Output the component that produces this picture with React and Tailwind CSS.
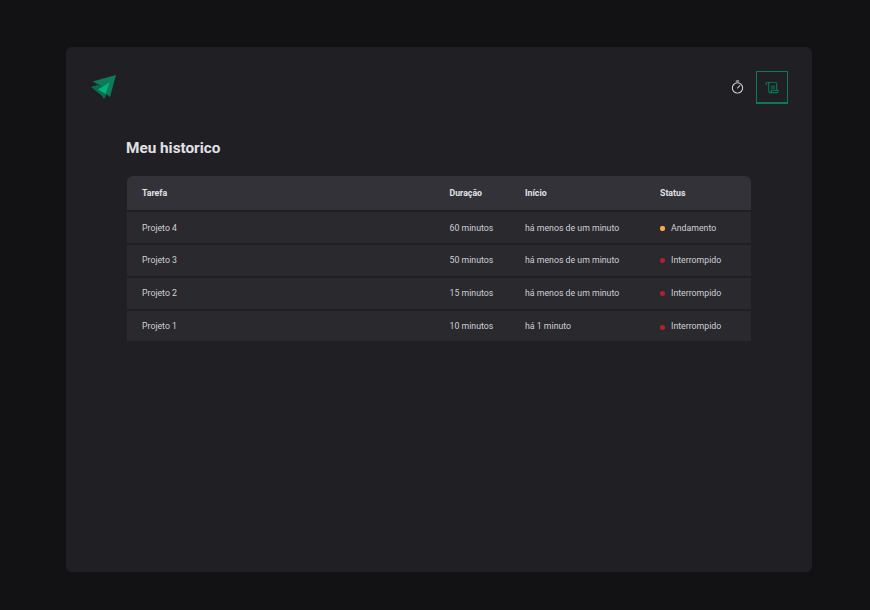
import React from "react";
import { PiTimer, PiScroll } from "react-icons/pi";

const rows = [
  { task: "Projeto 4", duration: "60 minutos", start: "há menos de um minuto", status: "Andamento", dot: "bg-[#fba94c]" },
  { task: "Projeto 3", duration: "50 minutos", start: "há menos de um minuto", status: "Interrompido", dot: "bg-[#ab222e]" },
  { task: "Projeto 2", duration: "15 minutos", start: "há menos de um minuto", status: "Interrompido", dot: "bg-[#ab222e]" },
  { task: "Projeto 1", duration: "10 minutos", start: "há 1 minuto", status: "Interrompido", dot: "bg-[#ab222e]" },
];

function Logo() {
  return (
    <svg width="28" height="28" viewBox="0 0 28 28" className="shrink-0">
      <path d="M1 13 L7 11 L20 14 L14 25 L12 22 Z" fill="#0b6b4f" />
      <path d="M2.5 7.5 L26 1 L20 23 L16.5 20 L13 13 Z" fill="#0f7a5a" />
      <path d="M19.5 8.5 L8 15.5 L15.5 20 Z" fill="#00b37e" />
    </svg>
  );
}

export default function App() {
  return (
    <div className="h-[610px] bg-[#121214] pt-[47px] pr-[58px] pb-[38px] pl-[66px] font-['Roboto',sans-serif]">
      <div className="h-full rounded-md bg-[#202024] px-[24px] pt-[24px]">
        {/* Header */}
        <header className="flex items-center justify-between">
          <div className="flex items-center">
            <Logo />
          </div>
          <nav className="flex items-center gap-[3px]">
            <a className="flex h-[33px] w-[32px] items-center justify-center text-[#e1e1e6]">
              <PiTimer size={15} />
            </a>
            <a className="flex h-[33px] w-[32px] items-center justify-center border border-b-2 border-[#0b7a5a] text-[#00875f]">
              <PiScroll size={15} />
            </a>
          </nav>
        </header>

        {/* History */}
        <main className="mx-[37px] mt-[33px]">
          <h1 className="-ml-[1px] text-[15.3px] leading-[22px] font-bold text-[#e1e1e6]">Meu historico</h1>

          <table className="mt-[17px] w-[624px] table-fixed border-collapse text-[8.75px]">
            <thead>
              <tr className="h-[35px] border-b-2 border-[#202024] bg-[#323238] text-left text-[#e1e1e6]">
                <th className="w-[307.5px] rounded-tl-md pt-[1px] pl-[15px] font-bold">Tarefa</th>
                <th className="w-[75.5px] pt-[1px] pl-[15px] font-bold">Duração</th>
                <th className="w-[135px] pt-[1px] pl-[15px] font-bold">Início</th>
                <th className="rounded-tr-md pt-[1px] pl-[15px] font-bold">Status</th>
              </tr>
            </thead>
            <tbody>
              {rows.map((r) => (
                <tr key={r.task} className="h-[33px] border-b-2 border-[#202024] bg-[#29292e] text-[#d0d0d6] first:[&>td]:pt-[2px] last:h-[31px] last:border-b-0 last:[&>td]:pt-[2px]">
                  <td className="pl-[15px]">{r.task}</td>
                  <td className="pl-[15px]">{r.duration}</td>
                  <td className="pl-[15px]">{r.start}</td>
                  <td className="pl-[15px]">
                    <span className="flex items-center gap-[6px]">
                      <span className={`h-[5px] w-[5px] rounded-[2px] ${r.dot}`} />
                      {r.status}
                    </span>
                  </td>
                </tr>
              ))}
            </tbody>
          </table>
        </main>
      </div>
    </div>
  );
}
